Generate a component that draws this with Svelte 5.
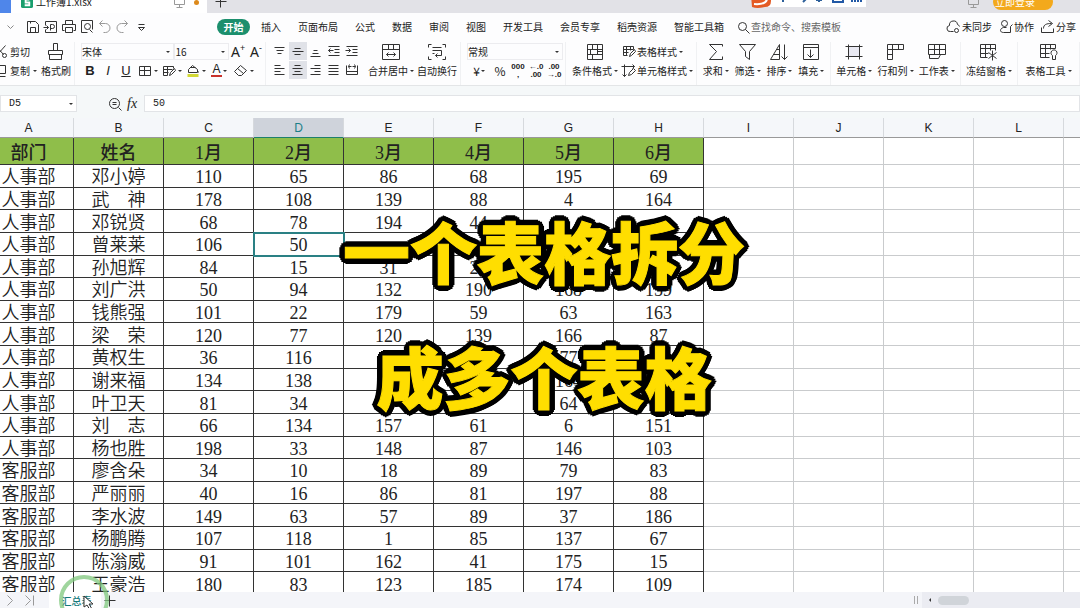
<script>
  const menus = ['插入', '页面布局', '公式', '数据', '审阅', '视图', '开发工具', '会员专享', '稻壳资源', '智能工具箱'];
  const quick = [
    ['save', '保存'],
    ['pdf', '输出为PDF'],
    ['print', '打印'],
    ['preview', '打印预览'],
    ['undo', '撤销'],
    ['redo', '恢复'],
    ['more', '自定义']
  ];
  const letters = ['A', 'B', 'C', 'D', 'E', 'F', 'G', 'H', 'I', 'J', 'K', 'L', 'M'];
  const blank = ['I', 'J', 'K', 'L', 'M'];
  const head = ['部门', '姓名', '1月', '2月', '3月', '4月', '5月', '6月'];

  const rows = [
    ['人事部', '邓小婷', 110, 65, 86, 68, 195, 69],
    ['人事部', '武　神', 178, 108, 139, 88, 4, 164],
    ['人事部', '邓锐贤', 68, 78, 194, 44, '', ''],
    ['人事部', '曾莱莱', 106, 50, '', '', '', ''],
    ['人事部', '孙旭辉', 84, 15, 31, 26, '', ''],
    ['人事部', '刘广洪', 50, 94, 132, 190, 168, 159],
    ['人事部', '钱熊强', 101, 22, 179, 59, 63, 163],
    ['人事部', '梁　荣', 120, 77, 120, 139, 166, 87],
    ['人事部', '黄权生', 36, 116, '', '', 77, ''],
    ['人事部', '谢来福', 134, 138, '', '', 164, ''],
    ['人事部', '叶卫天', 81, 34, '', '', 64, ''],
    ['人事部', '刘　志', 66, 134, 157, 61, 6, 151],
    ['人事部', '杨也胜', 198, 33, 148, 87, 146, 103],
    ['客服部', '廖含朵', 34, 10, 18, 89, 79, 83],
    ['客服部', '严丽丽', 40, 16, 86, 81, 197, 88],
    ['客服部', '李水波', 149, 63, 57, 89, 37, 186],
    ['客服部', '杨鹏腾', 107, 118, 1, 85, 137, 67],
    ['客服部', '陈滃威', 91, 101, 162, 41, 175, 15],
    ['客服部', '王豪浩', 180, 83, 123, 185, 174, 109]
  ];

  // small icons use a 16 box, large ones a 20 box
  const icons = {
    save: '<path d="M3 3h8l3 3v8H3zM6 14V9h5v5M6 3v2"/>',
    pdf: '<path d="M3 7V3h11v11H3v-3M1 9h5M4 7l2 2-2 2M8 12V6h2a2 2 0 010 4H8"/>',
    print: '<path d="M5 6V2h7v4M4 12H2V6h13v6h-2M5 9h7v5H5z"/>',
    preview: '<path d="M9 14H3V2h11v9M11 11l3 3"/><circle cx="9" cy="8" r="3"/>',
    undo: '<path d="M6 2L3 5l3 3M3 5h6a4 4 0 010 9H7" stroke="#999"/>',
    redo: '<path d="M10 2l3 3-3 3M13 5H7a4 4 0 000 9h2" stroke="#999"/>',
    more: '<path d="M6 6h6M6 9l3 3 3-3z"/>',
    down: '<path d="M5 7l3 3 3-3" stroke="#888"/>',
    cut: '<path d="M3 2l8 9M13 2L5 11"/><circle cx="4" cy="12" r="2"/><circle cx="12" cy="12" r="2"/>',
    copy: '<path d="M3 3h10v8H3zM6 14h7"/>',
    borders: '<path d="M3 4h11v9H3zM8 4v9M3 8h11"/>',
    draw: '<path d="M13 6V4H3v9h4M7 4v9M3 7h9M3 10h5M9 13l1-3 4-4 1 2-4 4z"/>',
    fill: '<path d="M4 10V7l4-4 5 4v3zM6 5h5M13 8l1 2"/><path d="M3 13h11" stroke="#d3d936" stroke-width="3"/>',
    eraser: '<path d="M2 9l6-6 6 5-5 5H6zM5 6l6 5"/>',
    top: '<path d="M3 5h10M5 8h7M6 11h4"/>',
    middle: '<path d="M5 6h6M3 9h11M5 12h6"/>',
    bottom: '<path d="M6 8h4M5 11h6M3 14h10"/>',
    outdent: '<path d="M3 4h11M9 7h5M9 10h5M3 13h11M8 8H3M5 6L3 8l2 2"/>',
    indent: '<path d="M3 4h11M9 7h5M9 10h5M3 13h11M2 8h5M5 6l2 2-2 2"/>',
    left: '<path d="M3 4h6M3 7h10M3 10h6M3 13h10"/>',
    center: '<path d="M5 4h6M3 7h10M5 10h6M3 13h10"/>',
    right: '<path d="M7 4h6M3 7h10M7 10h6M3 13h10"/>',
    justify: '<path d="M3 4h10M3 7h10M3 10h10M3 13h10"/>',
    spread: '<path d="M3 4v9M14 4v9M3 13h11M3 10h11M5 5h3M12 5H9M6 3L5 5l1 2M11 3l1 2-1 2"/>',
    tstyle: '<path d="M13 6V3H3v9h4M6 3v9M10 3v4M3 6h10M3 9h5M9 13l1-3 4-4 1 2-4 4z"/>',
    cstyle: '<path d="M4 2v12M1 4h13M2 12l2 2 2-2M12 2l2 2-2 2M8 13l1-3 4-4 2 2-4 4z"/>',
    find: '<circle cx="8" cy="8" r="4"/><path d="M11 11l4 4"/>',
    zoomout: '<circle cx="8" cy="8" r="5"/><path d="M12 12l3 3M6 7h4M6 9h4"/>',
    cloud: '<path d="M8 13H5a3 3 0 01-1-6 4 4 0 018-1 3 3 0 012 2"/><circle cx="11" cy="12" r="2"/>',
    people: '<circle cx="7" cy="5" r="3"/><path d="M9 9H6c-4 1-4 5 0 5h7M15 6l-2 2v6"/>',
    share: '<path d="M2 9v5h12v-4M4 10c0-4 3-5 8-5M9 2l4 3-4 3"/>',
    brush: '<path d="M8 9V2h4v7M3 9h14v4H3zM4 13v5h12v-5"/>',
    merge: '<path d="M2 3h17v15H2zM2 8h17M8 3v5M13 3v5M6 13h9M8 11l-2 2 2 2M13 11l2 2-2 2"/>',
    wrap: '<path d="M5 3H2v3M16 3h3v3M5 18H2v-3M16 18h3v-3M6 6h9M6 9h9v5H9M6 12h2M11 12l-2 2 2 2"/>',
    cond: '<path d="M3 3h15v15H3zM3 8h15M3 13h15M8 3v5M13 3v10M8 13v5M6 8v5M13 10h5"/>',
    sum: '<path d="M17 5V3H4l7 7-7 8h13v-3"/>',
    filter: '<path d="M2 3h16l-6 7v8l-4-3v-5z"/>',
    sort: '<path d="M2 18L11 3v15zM5 13h6M8 8h3M16 3v15M13 15l3 3 3-3"/>',
    filldown: '<path d="M3 3h15v15H3zM3 6h15M10 8v8M7 13l3 3 3-3"/>',
    cell: '<path d="M5 5h11v10H5z" fill="#e9e9f2"/><path d="M5 3v15M16 3v15M2 5h17M2 15h17"/>',
    rowcol: '<path d="M2 3h16v5H2zM2 8v10h5V3M13 3v5M2 13h5"/>',
    sheet: '<path d="M2 3h17v10H2zM2 8h17M8 3v10M13 3v10M3 13v4h9l2-4"/>',
    freeze: '<path d="M17 9V3H2v13h7M2 7h15M2 12h8M7 3v13M12 3v6M14 9v10M10 11l8 6M18 11l-8 6"/>',
    tools: '<path d="M17 7V3H2v13h9M2 7h15M2 12h9M7 3v13M12 3v5M14 14a3 3 0 113 0v4h-3z"/>',
    screen: '<path d="M3 2h10v9H3zM8 11v3M5 14h6" stroke="#999"/>',
    next: '<path d="M6 3l5 5-5 5" stroke="#999"/>',
    last: '<path d="M4 3l5 5-5 5M12 3v10" stroke="#999"/>',
    plus: '<path d="M8 3v11M3 8h11"/>'
  };

  const aligns = ['top', 'middle', 'bottom', 'outdent', 'indent', 'left', 'center', 'right', 'justify', 'spread'];

  let picked = $state({ row: 3, col: 3 });
  let address = $derived(letters[picked.col] + (picked.row + 2));
  let content = $derived(String(rows[picked.row][picked.col]));
</script>

{#snippet icon(name, size = 16)}
  <svg class={size === 20 ? 'large' : 'small'} viewBox="0.5 0.5 {size} {size}" aria-hidden="true">{@html icons[name]}</svg>
{/snippet}

{#snippet caret()}
  <svg class="caret" viewBox="0 0 4 4" aria-hidden="true"><path d="M0 1h4L2 3z" /></svg>
{/snippet}

{#snippet big(name, label, drop = true)}
  <button class="big">
    {@render icon(name, 20)}
    <span class="label">{label}{#if drop}{@render caret()}{/if}</span>
  </button>
{/snippet}

<div class="app">
  <header class="titlebar">
    <span class="home"></span>
    <div class="doc">
      <svg class="logo" viewBox="0 0 13 13" aria-hidden="true">
        <rect width="13" height="13" rx="2" fill="#1a9f6d" stroke="none" />
        <path d="M9 4H5v3h4v3H4" stroke="#fff" stroke-width="2" />
      </svg>
      <span class="file">工作簿1.xlsx</span>
      {@render icon('screen')}
      <span class="dot"></span>
    </div>
    <button class="newdoc" aria-label="新建">{@render icon('plus')}</button>
    <div class="ime">
      <svg viewBox="0 0 116 22" aria-hidden="true">
        <rect x="12" y="0" width="104" height="16" fill="#fff" stroke="none" />
        <path d="M1 4h20v6q0 6-6 6-8 2-13 0z" fill="#e45b25" stroke="none" />
        <path d="M4 13q12 1 13-5" stroke="#fff" stroke-width="2" />
        <path d="M33 5v6M53 11l3-3M69 8v3M66 9h6" stroke="#2d5f9a" stroke-width="2" />
        <path d="M83 6h10v5H83zM102 11V7h3v4M108 11V7h3v4" stroke="#2259a6" stroke-width="2" />
      </svg>
    </div>
    <div class="account">
      {@render icon('screen')}
      <button class="login">立即登录</button>
    </div>
  </header>

  <nav class="menu">
    <div class="quick">
      <button class="tool" aria-label="文件">{@render icon('down')}</button>
      {#each quick as [name, label]}
        <button class="tool" aria-label={label}>{@render icon(name)}</button>
      {/each}
    </div>
    <div class="tabs">
      <button class="start">开始</button>
      {#each menus as m}
        <button>{m}</button>
      {/each}
    </div>
    <label class="search">
      {@render icon('find')}
      <input type="text" placeholder="查找命令、搜索模板" aria-label="查找命令" />
    </label>
    <div class="cloud">
      <button>{@render icon('cloud')}未同步</button>
      <button>{@render icon('people')}协作</button>
      <button>{@render icon('share')}分享</button>
    </div>
  </nav>

  <section class="ribbon">
    <div class="group clip">
      <div class="stack">
        <button class="line">{@render icon('cut')}剪切</button>
        <button class="line">{@render icon('copy')}复制{@render caret()}</button>
      </div>
      {@render big('brush', '格式刷', false)}
    </div>

    <div class="group font">
      <div class="line">
        <span class="pick family">
          <select aria-label="字体"><option>宋体</option></select>{@render caret()}
        </span>
        <span class="pick size">
          <select aria-label="字号"><option>16</option></select>{@render caret()}
        </span>
        <button class="letter" aria-label="增大字号">A<sup>+</sup></button>
        <button class="letter" aria-label="减小字号">A<sup>-</sup></button>
      </div>
      <div class="line">
        <button class="tool bold">B</button>
        <button class="tool italic">I</button>
        <button class="tool under">U</button>
        <button class="drop" aria-label="边框">{@render icon('borders')}{@render caret()}</button>
        <button class="drop" aria-label="绘图边框">{@render icon('draw')}{@render caret()}</button>
        <button class="drop" aria-label="填充颜色">{@render icon('fill')}{@render caret()}</button>
        <button class="drop" aria-label="字体颜色"><span class="color">A</span>{@render caret()}</button>
        <button class="drop" aria-label="清除">{@render icon('eraser')}{@render caret()}</button>
      </div>
    </div>

    <div class="group align">
      <div class="aligns">
        {#each aligns as name}
          <button class="tool" class:on={name === 'middle' || name === 'center'} aria-label={name}>{@render icon(name)}</button>
        {/each}
      </div>
      {@render big('merge', '合并居中')}
      {@render big('wrap', '自动换行', false)}
    </div>

    <div class="group number">
      <div class="line">
        <span class="pick wide">
          <select aria-label="数字格式"><option>常规</option></select>{@render caret()}
        </span>
      </div>
      <div class="line formats">
        <button class="drop">¥{@render caret()}</button>
        <button class="tool">%</button>
        <button class="tool tiny">000<br />,</button>
        <button class="tool tiny">←.0<br />.00</button>
        <button class="tool tiny">.00<br />→.0</button>
      </div>
    </div>

    <div class="group style">
      {@render big('cond', '条件格式')}
      <div class="stack">
        <button class="line">{@render icon('tstyle')}表格样式{@render caret()}</button>
        <button class="line">{@render icon('cstyle')}单元格样式{@render caret()}</button>
      </div>
    </div>

    <div class="group even">
      {@render big('sum', '求和')}
      {@render big('filter', '筛选')}
      {@render big('sort', '排序')}
      {@render big('filldown', '填充')}
    </div>

    <div class="group even">
      {@render big('cell', '单元格')}
      {@render big('rowcol', '行和列')}
      {@render big('sheet', '工作表')}
    </div>

    <div class="group even">{@render big('freeze', '冻结窗格')}</div>
    <div class="group even">{@render big('tools', '表格工具')}</div>
  </section>

  <section class="formula">
    <label class="name">
      <input type="text" value={address} aria-label="名称框" />{@render caret()}
    </label>
    <div class="fn">
      {@render icon('zoomout')}
      <span class="fx">fx</span>
    </div>
    <input class="value" type="text" value={content} aria-label="编辑栏" />
  </section>

  <main class="sheet">
    <table>
      <thead>
        <tr class="letters">
          {#each letters as l, c}
            <th class:current={c === picked.col}>{l}</th>
          {/each}
        </tr>
      </thead>
      <tbody>
        <tr class="head">
          {#each head as h}
            <th>{h}</th>
          {/each}
          {#each blank as b}
            <td class="blank"></td>
          {/each}
        </tr>
        {#each rows as row, r}
          <tr>
            {#each row as cell, c}
              <td class:picked={r === picked.row && c === picked.col} onclick={() => (picked = { row: r, col: c })}>{cell}</td>
            {/each}
            {#each blank as b}
              <td class="blank"></td>
            {/each}
          </tr>
        {/each}
      </tbody>
    </table>
  </main>

  <footer class="bottom">
    <button class="nav" aria-label="下一个">{@render icon('next')}</button>
    <button class="nav" aria-label="最后一个">{@render icon('last')}</button>
    <button class="sheettab">
      汇总表
      <svg class="click" viewBox="0 0 50 50" aria-hidden="true">
        <circle cx="25" cy="25" r="23" stroke="#7fc77c" stroke-width="4" opacity="0.75" />
        <path d="M25 21v11l3-2 3 5 2-1-3-5h4z" fill="#fff" stroke="#333" />
      </svg>
    </button>
    <button class="add" aria-label="新建工作表">{@render icon('plus')}</button>
    <span class="split"></span>
    <div class="scroll">
      <svg class="caret" viewBox="0 0 4 4" aria-hidden="true"><path d="M3 0v4L1 2z" /></svg>
      <span class="thumb"></span>
    </div>
  </footer>

  <div class="caption">
    <div>一个表格拆分</div>
    <div>成多个表格</div>
  </div>
</div>

<style>
  :global(body) {
    margin: 0;
  }

  .app {
    position: relative;
    display: flex;
    flex-direction: column;
    height: 100vh;
    overflow: hidden;
    background: #fff;
    color: #222;
    font: 10px/16px "Noto Sans CJK SC", sans-serif;
  }

  button,
  input,
  select {
    margin: 0;
    padding: 0;
    border: 0;
    background: none;
    color: inherit;
    font: inherit;
    white-space: nowrap;
    min-width: 0;
  }

  select {
    appearance: none;
    flex: 1;
  }

  svg {
    display: block;
    flex: none;
    fill: none;
    stroke: #333;
    stroke-width: 1;
  }

  .small {
    width: 16px;
    height: 16px;
  }

  .large {
    width: 20px;
    height: 20px;
  }

  .caret {
    width: 4px;
    height: 4px;
    fill: #333;
    stroke: none;
  }

  /* title bar */
  .titlebar {
    display: flex;
    align-items: stretch;
    flex: none;
    height: 22px;
    margin-top: -9px;
    background: #e2e2e7;
  }

  .home {
    width: 11px;
    background: #4f86ea;
  }

  .doc {
    display: flex;
    align-items: center;
    box-sizing: border-box;
    width: 196px;
    padding: 0 8px 0 10px;
    background: #fff;
  }

  .logo {
    width: 12px;
    height: 12px;
  }

  .file {
    flex: 1;
    padding-left: 3px;
  }

  .dot {
    width: 5px;
    height: 5px;
    margin-left: 6px;
    border-radius: 50%;
    background: #dd8a1c;
  }

  .newdoc {
    width: 28px;
    padding-left: 6px;
  }

  .ime {
    margin-left: auto;
  }

  .ime svg {
    width: 116px;
    height: 22px;
  }

  .account {
    display: flex;
    align-items: center;
    gap: 11px;
    padding: 0 27px 0 100px;
  }

  .login {
    width: 60px;
    height: 16px;
    padding-right: 16px;
    border-radius: 8px;
    background: #f3a91c;
    color: #fff;
  }

  /* menu row */
  .menu {
    display: flex;
    align-items: center;
    flex: none;
    height: 27px;
    background: #fdfdfe;
  }

  .quick {
    display: flex;
    width: 217px;
    padding-left: 2px;
    box-sizing: border-box;
  }

  .quick .tool:first-child {
    margin-right: 4px;
  }

  .tool {
    display: flex;
    align-items: center;
    justify-content: center;
    width: 18px;
    height: 18px;
  }

  .tabs {
    display: flex;
    align-items: center;
    gap: 17px;
  }

  .tabs .start {
    width: 33px;
    margin-right: -6px;
    border-radius: 8px;
    background: #1c8f6d;
    color: #fff;
    font-weight: 700;
  }

  .search {
    display: flex;
    align-items: center;
    margin-left: 11px;
    color: #666;
  }

  .search input {
    width: 100px;
  }

  .search input::placeholder {
    color: #666;
    opacity: 1;
  }

  .cloud {
    display: flex;
    gap: 6px;
    margin-left: auto;
    padding-right: 4px;
  }

  .cloud button {
    display: flex;
    align-items: center;
  }

  /* ribbon */
  .ribbon {
    display: grid;
    grid-template-columns: 75fr 191fr 195fr 105fr 131fr 134fr 130fr 57fr 62fr;
    flex: none;
    height: 46px;
    padding-top: 2px;
    box-sizing: border-box;
    border-bottom: 1px solid #e3e5e7;
    background: #fdfdfe;
  }

  .group {
    display: flex;
    min-width: 0;
    border-right: 1px solid #f0f1f3;
  }

  .line {
    display: flex;
    align-items: center;
    height: 19px;
  }

  .line .caret,
  .label .caret {
    margin-left: 2px;
  }

  .big {
    display: flex;
    flex-direction: column;
    align-items: center;
    gap: 1px;
    height: 38px;
  }

  .label {
    display: flex;
    align-items: center;
  }

  .clip .line {
    gap: 1px;
    margin-left: -7px;
  }

  .clip .big {
    margin-left: 4px;
  }

  .font,
  .number {
    flex-direction: column;
    padding-left: 6px;
  }

  .pick {
    display: flex;
    align-items: center;
    box-sizing: border-box;
    height: 17px;
    padding-right: 3px;
    border: 1px solid #ececef;
  }

  .family {
    width: 94px;
  }

  .size {
    width: 55px;
  }

  .wide {
    width: 96px;
  }

  .letter {
    width: 18px;
    font: 14px/18px "Noto Sans", sans-serif;
  }

  .letter sup {
    font-size: 9px;
    line-height: 1px;
  }

  .bold,
  .italic,
  .under {
    font: 13px/16px "Liberation Sans", sans-serif;
  }

  .bold {
    font-weight: 700;
  }

  .italic {
    font-style: italic;
  }

  .under {
    text-decoration: underline;
  }

  .drop {
    display: flex;
    align-items: center;
    justify-content: center;
    width: 24px;
  }

  .line .drop .caret {
    margin-left: 1px;
  }

  .color {
    width: 11px;
    border-bottom: 2px solid #c8322b;
    font: 12px/11px "Liberation Sans", sans-serif;
  }

  .aligns {
    display: grid;
    grid-template-columns: repeat(5, 18px);
    grid-auto-rows: 19px;
    padding: 0 7px 0 5px;
  }

  .on {
    background: #e0e2e8;
  }

  .align .big {
    width: 47px;
  }

  .formats {
    font-size: 12px;
  }

  .formats .tiny {
    display: block;
    font: 700 8px/8px "Liberation Sans", sans-serif;
  }

  .style {
    gap: 3px;
    padding-left: 6px;
  }

  .even {
    justify-content: space-evenly;
  }

  /* formula bar */
  .formula {
    display: flex;
    flex: none;
    padding: 9px 0 6px;
    background: #f5f8f9;
    font-family: "Liberation Mono", monospace;
  }

  .name {
    display: flex;
    align-items: center;
    box-sizing: border-box;
    width: 77px;
    height: 17px;
    padding: 0 3px 0 8px;
    border: 1px solid #e2e4e7;
    background: #fff;
  }

  .name input {
    flex: 1;
  }

  .fn {
    display: flex;
    align-items: center;
    gap: 4px;
    padding: 0 7px 0 30px;
  }

  .fx {
    font: italic 14px/16px "Liberation Serif", serif;
  }

  .value {
    flex: 1;
    box-sizing: border-box;
    height: 17px;
    padding-left: 8px;
    border: 1px solid #e2e4e7;
    background: #fff;
  }

  /* grid */
  .sheet {
    flex: 1;
    min-height: 0;
    overflow: hidden;
  }

  table {
    width: 1170px;
    height: 477px;
    margin-left: -16px;
    table-layout: fixed;
    border-collapse: separate;
    border-spacing: 0;
    font: 350 18px/18px "Liberation Serif", "Noto Sans CJK SC", serif;
    text-align: center;
  }

  th,
  td {
    padding: 3px 0 0;
    border-right: 1px solid #333;
    border-bottom: 1px solid #333;
  }

  .letters {
    height: 20px;
  }

  .letters th {
    padding-top: 1px;
    border-right-color: #d6d9dd;
    border-bottom-color: #999;
    background: #f5f7fa;
    font: 12px/18px "Liberation Sans", sans-serif;
  }

  .letters .current {
    border-bottom-color: #1d7f6c;
    background: #cfd3db;
    color: #1b7f88;
  }

  .head {
    height: 27px;
  }

  .head th {
    background: #8fbe4a;
    font-weight: 500;
  }

  .blank {
    border-color: #c9cbcd;
  }

  .picked {
    outline: 2px solid #2a8084;
    outline-offset: -1px;
  }

  /* sheet tabs */
  .bottom {
    display: flex;
    flex: none;
    height: 16px;
    background: #f4f5f9;
  }

  .nav {
    width: 20px;
    padding: 1px 2px 0;
  }

  .sheettab {
    position: relative;
    width: 52px;
    margin-left: 9px;
    padding: 1px 0 0 3px;
    background: #fff;
    color: #14797a;
    font-weight: 500;
  }

  .click {
    position: absolute;
    left: 10px;
    top: -17px;
    width: 50px;
    height: 50px;
  }

  .add {
    padding: 1px 0 0 1px;
  }

  .split {
    width: 2px;
    height: 8px;
    margin: 4px 4px 0 auto;
    border: 1px solid #aaa;
    border-width: 0 1px;
  }

  .scroll {
    display: flex;
    align-items: center;
    gap: 6px;
    width: 152px;
    padding-left: 6px;
    background: #ebecf2;
  }

  .thumb {
    width: 31px;
    height: 9px;
    border-radius: 5px;
    background: #d0d4d9;
  }

  /* caption over the sheet */
  .caption {
    position: absolute;
    top: 187px;
    left: 0;
    right: 0;
    padding-left: 8px;
    color: #ffde00;
    font-size: 67px;
    font-weight: 900;
    line-height: 125px;
    text-align: center;
    white-space: nowrap;
    pointer-events: none;
    -webkit-text-stroke: 1px #ffde00;
    text-shadow: 6px 0 #000, -6px 0 #000, 0 6px #000, 0 -6px #000, 4px 4px #000, -4px 4px #000, 4px -4px #000,
      -4px -4px #000, 5px 2px #000, -5px 2px #000, 5px -2px #000, -5px -2px #000, 2px 5px #000, -2px 5px #000,
      2px -5px #000, -2px -5px #000, 3px 0 #000, -3px 0 #000, 0 3px #000, 0 -3px #000;
  }
</style>
